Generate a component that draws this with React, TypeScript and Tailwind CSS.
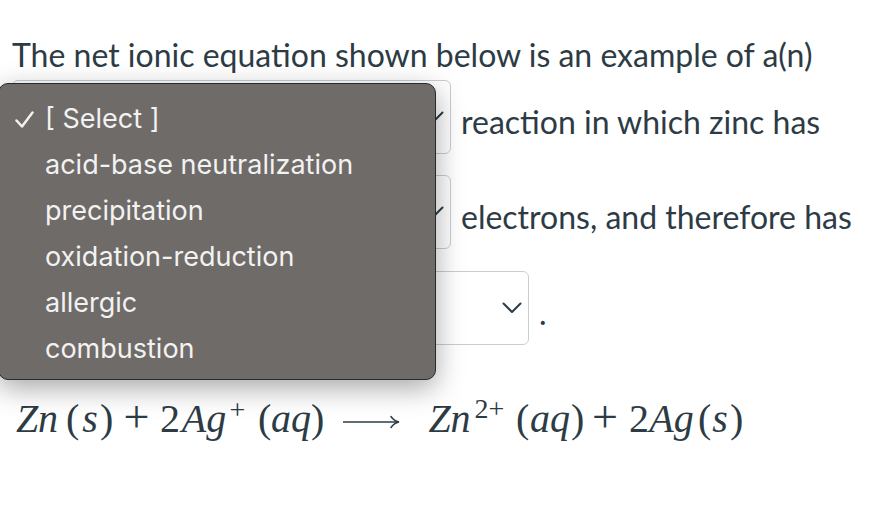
import React from "react";

function Chevron() {
  return (
    <svg width="20" height="12" viewBox="0 0 20 12" className="absolute right-[6px] top-1/2 -translate-y-1/2">
      <polyline points="1.5,1.5 10,10 18.5,1.5" fill="none" stroke="#2d3b45" strokeWidth="2" strokeLinecap="round" strokeLinejoin="round" />
    </svg>
  );
}

function SelectBox({ w }: { w: string }) {
  return (
    <div className={`relative ${w} h-[74px] shrink-0 rounded-[6px] border border-[#c7cdd1] bg-white`}>
      <Chevron />
    </div>
  );
}

const items = [
  "acid-base neutralization",
  "precipitation",
  "oxidation-reduction",
  "allergic",
  "combustion",
];

function Arrow() {
  return (
    <svg width="59" height="20" viewBox="0 0 59 20" className="relative top-[2px]">
      <line x1="1" y1="10" x2="56" y2="10" stroke="#2d3b45" strokeWidth="1.5" />
      <path d="M49 4.5 Q52 9 57 10 Q52 11 49 15.5" fill="none" stroke="#2d3b45" strokeWidth="1.5" strokeLinecap="round" />
    </svg>
  );
}

export default function App() {
  return (
    <div className="relative w-[870px] h-[520px] overflow-hidden bg-white text-[#2d3b45] font-['Lato',sans-serif]">
      <div className="pl-[12px] pt-[36px]">
        <div className="text-[32px] leading-[38px] whitespace-nowrap">
          The net ionic equation shown below is an example of a(n)
        </div>
        <div className="mt-[6px] flex items-start">
          <SelectBox w="w-[439px]" />
          <span className="ml-[10px] pt-[23px] text-[32px] leading-[38px] whitespace-nowrap">reaction in which zinc has</span>
        </div>
        <div className="mt-[21px] flex items-start">
          <SelectBox w="w-[439px]" />
          <span className="ml-[10px] pt-[23px] text-[32px] leading-[38px] whitespace-nowrap">electrons, and therefore has</span>
        </div>
        <div className="mt-[22px] flex items-start">
          <SelectBox w="w-[517px]" />
          <span className="ml-[10px] pt-[23px] text-[32px] leading-[38px]">.</span>
        </div>
        <div className="mt-[50px] flex items-baseline whitespace-nowrap font-['Liberation_Serif',serif] text-[40px] leading-[44px]">
          <span className="w-[50px] text-center italic">Zn</span>
          <span className="ml-[4px] w-[13px] text-center">(</span>
          <span className="ml-[1px] w-[20px] text-center italic">s</span>
          <span className="w-[12px] text-center">)</span>
          <span className="ml-[10px] w-[29px] text-center text-[46px]">+</span>
          <span className="ml-[9px] w-[20px] text-center">2</span>
          <span className="w-[48px] text-center italic">Ag</span>
          <span className="ml-[1px] w-[17px] text-center text-[28px] relative -top-[13px]">+</span>
          <span className="ml-[12px] w-[12px] text-center">(</span>
          <span className="ml-[1px] w-[40px] text-center italic">aq</span>
          <span className="w-[11px] text-center">)</span>
          <span className="ml-[20px] w-[59px] self-center flex items-center"><Arrow /></span>
          <span className="ml-[25px] w-[47px] text-center italic">Zn</span>
          <span className="w-[33px] text-center text-[28px] relative -top-[14px]">2+</span>
          <span className="ml-[10px] w-[13px] text-center">(</span>
          <span className="w-[42px] text-center italic">aq</span>
          <span className="w-[11px] text-center">)</span>
          <span className="ml-[9px] w-[28px] text-center text-[46px]">+</span>
          <span className="ml-[10px] w-[20px] text-center">2</span>
          <span className="w-[45px] text-center italic">Ag</span>
          <span className="ml-[4px] w-[12px] text-center">(</span>
          <span className="ml-[1px] w-[18px] text-center italic">s</span>
          <span className="ml-[1px] w-[12px] text-center">)</span>
        </div>
      </div>

      <div className="absolute left-[-2px] top-[83px] w-[438px] h-[297px] rounded-[10px] border border-[#2a2a2a] bg-[#6f6b68] shadow-[0_8px_28px_rgba(0,0,0,0.35)] pt-[12px] font-['Inter',sans-serif] text-[27px] text-[#f2f2f2]">
        <div className="relative h-[46px] leading-[46px] pl-[46px] whitespace-nowrap">
          <svg width="20" height="18" viewBox="0 0 20 18" className="absolute left-[16px] top-[15px]">
            <polyline points="1.5,9.5 7,15.5 17.5,1.5" fill="none" stroke="#f2f2f2" strokeWidth="2.5" strokeLinecap="round" strokeLinejoin="round" />
          </svg>
          [ Select ]
        </div>
        {items.map((t) => (
          <div key={t} className="h-[46px] leading-[46px] pl-[46px] whitespace-nowrap">
            {t}
          </div>
        ))}
      </div>
    </div>
  );
}
